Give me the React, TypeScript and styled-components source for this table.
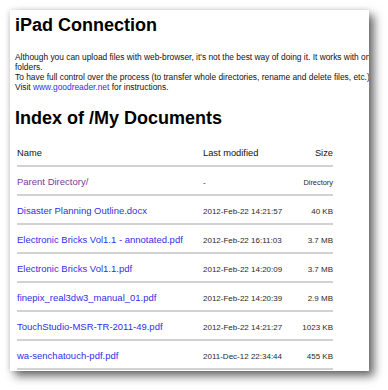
import React from "react";
import styled, { createGlobalStyle } from "styled-components";

const Global = createGlobalStyle`
  html, body { margin: 0; padding: 0; background: #ffffff; }
  body { font-family: "Liberation Sans", Arial, sans-serif; }
`;

const Stage = styled.div`
  width: 388px;
  height: 390px;
  padding: 10px 0 0 10px;
  box-sizing: border-box;
  background: #ffffff;
`;

const Page = styled.div`
  width: 359px;
  height: 361px;
  box-sizing: border-box;
  padding: 4px 0 0 5px;
  background: #ffffff;
  overflow: hidden;
  box-shadow: 5px 5px 9px rgba(0, 0, 0, 0.6), -1px 0 5px rgba(0, 0, 0, 0.12);
`;

const Title = styled.h1<{ $gap?: number }>`
  margin: ${(p) => p.$gap ?? 0}px 0 0 0;
  font-size: 18px;
  line-height: 22px;
  font-weight: 700;
  color: #000;
  white-space: nowrap;
`;

const Intro = styled.p`
  margin: 16px 0 0 0;
  font-size: 8.4px;
  line-height: 10px;
  color: #111;
  white-space: nowrap;
`;

const Line = styled.span`
  display: block;
`;

const A = styled.a<{ $visited?: boolean }>`
  color: ${(p) => (p.$visited ? "#7a3a9c" : "#2f2fe6")};
  text-decoration: none;
`;

const Listing = styled.div`
  margin: 9px 0 0 2px;
  width: 316px;
  display: flex;
  flex-direction: column;
`;

const Row = styled.div`
  height: 29px;
  box-sizing: border-box;
  display: grid;
  grid-template-columns: 186px 1fr auto;
  align-items: baseline;
  align-content: end;
  padding-bottom: 6px;
  border-bottom: 2px solid #d2d2d2;
`;

const NameCell = styled.div<{ $head?: boolean }>`
  font-size: ${(p) => (p.$head ? "9.3px" : "9.5px")};
  line-height: 11px;
  color: #111;
  white-space: nowrap;
`;

const DateCell = styled.div<{ $head?: boolean }>`
  font-size: ${(p) => (p.$head ? "9.3px" : "8px")};
  line-height: 11px;
  color: ${(p) => (p.$head ? "#111" : "#2a2a2a")};
  white-space: nowrap;
`;

const SizeCell = styled.div<{ $head?: boolean; $small?: boolean }>`
  font-size: ${(p) => (p.$head ? "9.3px" : p.$small ? "7.4px" : "8px")};
  line-height: 11px;
  color: ${(p) => (p.$head ? "#111" : "#2a2a2a")};
  text-align: right;
  white-space: nowrap;
`;

type Entry = { name: string; date: string; size: string; visited?: boolean; dir?: boolean };

const entries: Entry[] = [
  { name: "Parent Directory/", date: "-", size: "Directory", visited: true, dir: true },
  { name: "Disaster Planning Outline.docx", date: "2012-Feb-22 14:21:57", size: "40 KB" },
  { name: "Electronic Bricks Vol1.1 - annotated.pdf", date: "2012-Feb-22 16:11:03", size: "3.7 MB" },
  { name: "Electronic Bricks Vol1.1.pdf", date: "2012-Feb-22 14:20:09", size: "3.7 MB" },
  { name: "finepix_real3dw3_manual_01.pdf", date: "2012-Feb-22 14:20:39", size: "2.9 MB" },
  { name: "TouchStudio-MSR-TR-2011-49.pdf", date: "2012-Feb-22 14:21:27", size: "1023 KB" },
  { name: "wa-senchatouch-pdf.pdf", date: "2011-Dec-12 22:34:44", size: "455 KB" },
];

export default function App() {
  return (
    <>
      <Global />
      <Stage>
        <Page>
          <Title>iPad Connection</Title>
          <Intro>
            <Line>
              Although you can upload files with web-browser, it's not the best way of doing it. It works with only files, not
            </Line>
            <Line>folders.</Line>
            <Line>
              To have full control over the process (to transfer whole directories, rename and delete files, etc.) please use WebDAV client.
            </Line>
            <Line>
              Visit <A href="#">www.goodreader.net</A> for instructions.
            </Line>
          </Intro>
          <Title $gap={15}>Index of /My Documents</Title>
          <Listing>
            <Row>
              <NameCell $head>Name</NameCell>
              <DateCell $head>Last modified</DateCell>
              <SizeCell $head>Size</SizeCell>
            </Row>
            {entries.map((e) => (
              <Row key={e.name}>
                <NameCell>
                  <A href="#" $visited={e.visited}>
                    {e.name}
                  </A>
                </NameCell>
                <DateCell>{e.date}</DateCell>
                <SizeCell $small={e.dir}>{e.size}</SizeCell>
              </Row>
            ))}
          </Listing>
        </Page>
      </Stage>
    </>
  );
}
